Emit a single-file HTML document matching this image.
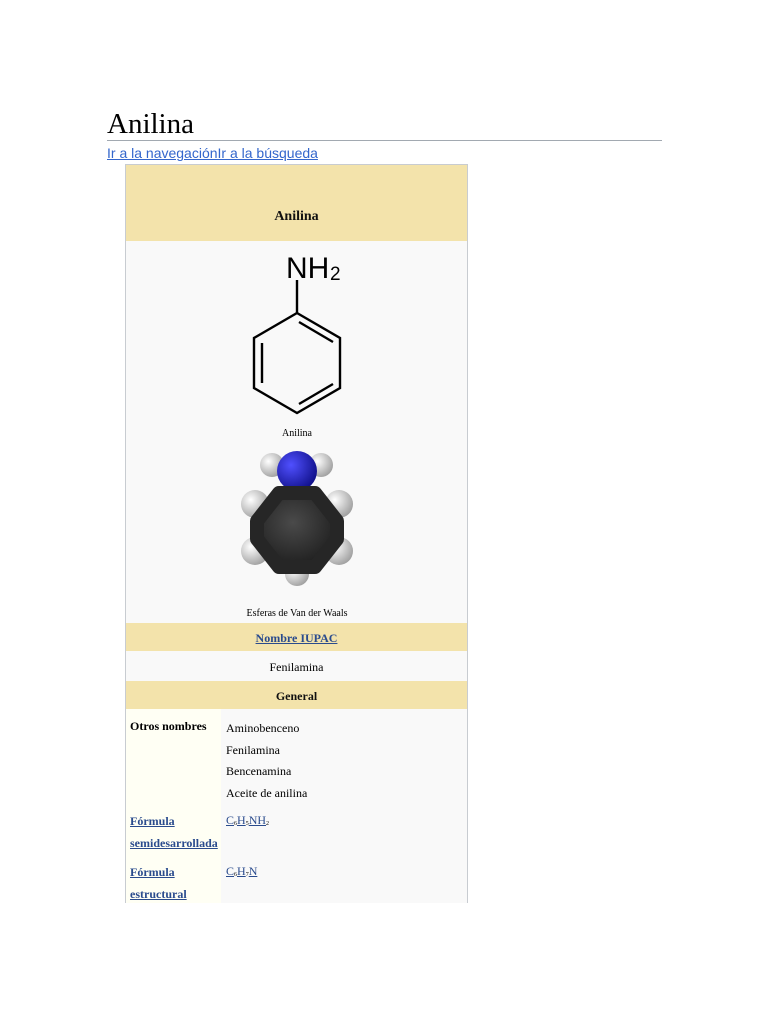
<!DOCTYPE html>
<html><head><meta charset="utf-8">
<style>
body{margin:0;width:768px;height:1024px;background:#fff;position:relative;font-family:"Liberation Serif",serif;}
.abs{position:absolute;}
h1{position:absolute;left:107px;top:104px;margin:0;font-weight:normal;font-size:29px;font-family:"Liberation Serif",serif;color:#000;line-height:40px;}
.hr{position:absolute;left:107px;top:140px;width:555px;height:1px;background:#a2a9b1;}
.nav{position:absolute;left:107px;top:145px;font-family:"Liberation Sans",sans-serif;font-size:14px;color:#3366cc;text-decoration:underline;}
.box{position:absolute;left:125px;top:164px;width:341px;height:738px;border-left:1px solid #c8ccd1;border-right:1px solid #c8ccd1;border-top:1px solid #c8ccd1;background:#f9f9f9;}
.tan{position:absolute;left:0;width:341px;background:#f3e3ab;text-align:center;font-weight:bold;font-size:13px;}
.c{position:absolute;left:0;width:341px;text-align:center;font-size:12px;}
a{color:#2a4b8d;}
.lc{position:absolute;left:0;top:544px;width:95px;height:194px;background:#fffff4;}
.t{position:absolute;font-size:12px;line-height:16px;}
.b{font-weight:bold;}
sub{font-size:6px;vertical-align:-1px;}
</style></head><body>
<h1>Anilina</h1>
<div class="hr"></div>
<div class="nav">Ir a la navegaciónIr a la búsqueda</div>
<div class="box">
 <div class="tan" style="top:0;height:76px;line-height:104px;font-size:14px;color:#111">Anilina</div>
 <svg class="abs" style="left:0;top:76px" width="341" height="382" viewBox="125 240 341 382">
  <text x="285" y="277" font-family="Liberation Sans,sans-serif" font-size="30" fill="#000">NH</text>
  <text x="329" y="279" font-family="Liberation Sans,sans-serif" font-size="19" fill="#000">2</text>
  <g stroke="#000" stroke-width="2.4" fill="none">
   <line x1="296" y1="279" x2="296" y2="312"/>
   <polygon points="296,312 339,337 339,387 296,412 253,387 253,337"/>
   <line x1="298" y1="321" x2="332" y2="341"/>
   <line x1="261" y1="342" x2="261" y2="382"/>
   <line x1="298" y1="403" x2="332" y2="383"/>
  </g>
  <text x="296" y="435" text-anchor="middle" font-size="10" font-family="Liberation Serif,serif">Anilina</text>
  <defs>
   <radialGradient id="h" cx="35%" cy="35%" r="70%"><stop offset="0" stop-color="#fff"/><stop offset="1" stop-color="#a0a0a0"/></radialGradient>
   <radialGradient id="n" cx="35%" cy="35%" r="70%"><stop offset="0" stop-color="#5050ff"/><stop offset="1" stop-color="#10108a"/></radialGradient>
   <radialGradient id="cc" cx="45%" cy="40%" r="65%"><stop offset="0" stop-color="#4a4a4a"/><stop offset="1" stop-color="#1c1c1c"/></radialGradient>
  </defs>
  <circle cx="271" cy="464" r="12" fill="url(#h)"/>
  <circle cx="320" cy="464" r="12" fill="url(#h)"/>
  <circle cx="254" cy="503" r="14" fill="url(#h)"/>
  <circle cx="338" cy="503" r="14" fill="url(#h)"/>
  <circle cx="254" cy="550" r="14" fill="url(#h)"/>
  <circle cx="338" cy="550" r="14" fill="url(#h)"/>
  <circle cx="296" cy="573" r="12" fill="url(#h)"/>
  <circle cx="296" cy="470" r="20" fill="url(#n)"/>
  <polygon points="278,492 314,492 336,520 336,538 314,566 278,566 256,538 256,520" fill="url(#cc)" stroke="#262626" stroke-width="14" stroke-linejoin="round"/>
  <text x="296" y="615" text-anchor="middle" font-size="10" font-family="Liberation Serif,serif">Esferas de Van der Waals</text>
 </svg>
 <div class="tan" style="top:458px;height:28px;line-height:30px;font-size:12px"><a href="#">Nombre IUPAC</a></div>
 <div class="c" style="top:486px;height:30px;line-height:32px;">Fenilamina</div>
 <div class="tan" style="top:516px;height:28px;line-height:30px;font-size:12px;color:#111">General</div>
 <div class="lc"></div>
 <div class="t b" style="left:4px;top:553px">Otros nombres</div>
 <div class="t" style="left:100px;top:553px;line-height:21.7px">Aminobenceno<br>Fenilamina<br>Bencenamina<br>Aceite de anilina</div>
 <div class="t b" style="left:4px;top:646px;line-height:21.7px"><a href="#">Fórmula </a><br><a href="#">semidesarrollada</a></div>
 <div class="t" style="left:100px;top:647px"><a href="#">C</a><sub>6</sub><a href="#">H</a><sub>5</sub><a href="#">NH</a><sub>2</sub></div>
 <div class="t b" style="left:4px;top:697px;line-height:21.7px"><a href="#">Fórmula </a><br><a href="#">estructural</a></div>
 <div class="t" style="left:100px;top:698px"><a href="#">C</a><sub>6</sub><a href="#">H</a><sub>7</sub><a href="#">N</a></div>
</div>
</body></html>
